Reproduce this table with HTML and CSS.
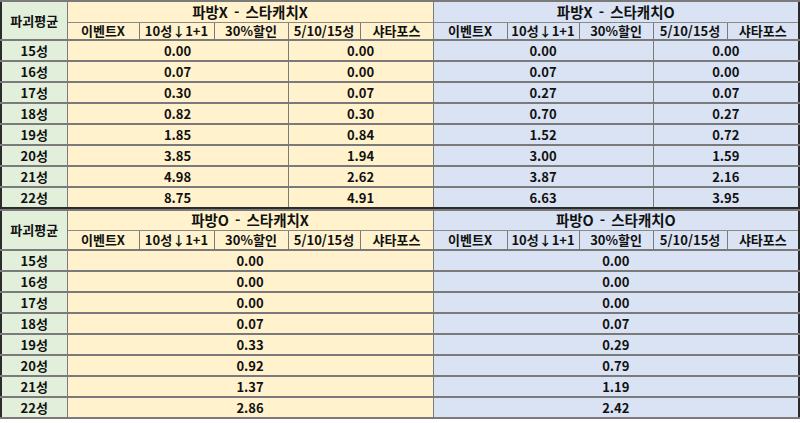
FILE: index.html
```html
<!DOCTYPE html>
<html lang="ko">
<head>
<meta charset="utf-8">
<title>파괴평균</title>
<link rel="stylesheet" href="styles.css">
</head>
<body>
<table class="sheet t1">
  <colgroup>
    <col class="c0"><col class="c1"><col class="c2"><col class="c3"><col class="c4"><col class="c5">
    <col class="c6"><col class="c7"><col class="c8"><col class="c9"><col class="c10">
  </colgroup>
  <tr class="h1">
    <th rowspan="2" class="lab">파괴평균</th>
    <th colspan="5" class="y title">파방X - 스타캐치X</th>
    <th colspan="5" class="b div title">파방X - 스타캐치O</th>
  </tr>
  <tr class="h2">
    <th class="y">이벤트X</th><th class="y">10성↓1+1</th><th class="y">30%할인</th><th class="y">5/10/15성</th><th class="y">샤타포스</th>
    <th class="b div">이벤트X</th><th class="b">10성↓1+1</th><th class="b">30%할인</th><th class="b">5/10/15성</th><th class="b">샤타포스</th>
  </tr>
  <tr><td class="lab">15성</td><td colspan="3" class="y">0.00</td><td colspan="2" class="y">0.00</td><td colspan="3" class="b div">0.00</td><td colspan="2" class="b">0.00</td></tr>
  <tr><td class="lab">16성</td><td colspan="3" class="y">0.07</td><td colspan="2" class="y">0.00</td><td colspan="3" class="b div">0.07</td><td colspan="2" class="b">0.00</td></tr>
  <tr><td class="lab">17성</td><td colspan="3" class="y">0.30</td><td colspan="2" class="y">0.07</td><td colspan="3" class="b div">0.27</td><td colspan="2" class="b">0.07</td></tr>
  <tr><td class="lab">18성</td><td colspan="3" class="y">0.82</td><td colspan="2" class="y">0.30</td><td colspan="3" class="b div">0.70</td><td colspan="2" class="b">0.27</td></tr>
  <tr><td class="lab">19성</td><td colspan="3" class="y">1.85</td><td colspan="2" class="y">0.84</td><td colspan="3" class="b div">1.52</td><td colspan="2" class="b">0.72</td></tr>
  <tr><td class="lab">20성</td><td colspan="3" class="y">3.85</td><td colspan="2" class="y">1.94</td><td colspan="3" class="b div">3.00</td><td colspan="2" class="b">1.59</td></tr>
  <tr><td class="lab">21성</td><td colspan="3" class="y">4.98</td><td colspan="2" class="y">2.62</td><td colspan="3" class="b div">3.87</td><td colspan="2" class="b">2.16</td></tr>
  <tr><td class="lab">22성</td><td colspan="3" class="y">8.75</td><td colspan="2" class="y">4.91</td><td colspan="3" class="b div">6.63</td><td colspan="2" class="b">3.95</td></tr>
</table>
<table class="sheet t2">
  <colgroup>
    <col class="c0"><col class="c1"><col class="c2"><col class="c3"><col class="c4"><col class="c5">
    <col class="c6"><col class="c7"><col class="c8"><col class="c9"><col class="c10">
  </colgroup>
  <tr class="h1">
    <th rowspan="2" class="lab">파괴평균</th>
    <th colspan="5" class="y title">파방O - 스타캐치X</th>
    <th colspan="5" class="b div title">파방O - 스타캐치O</th>
  </tr>
  <tr class="h2">
    <th class="y">이벤트X</th><th class="y">10성↓1+1</th><th class="y">30%할인</th><th class="y">5/10/15성</th><th class="y">샤타포스</th>
    <th class="b div">이벤트X</th><th class="b">10성↓1+1</th><th class="b">30%할인</th><th class="b">5/10/15성</th><th class="b">샤타포스</th>
  </tr>
  <tr><td class="lab">15성</td><td colspan="5" class="y">0.00</td><td colspan="5" class="b div">0.00</td></tr>
  <tr><td class="lab">16성</td><td colspan="5" class="y">0.00</td><td colspan="5" class="b div">0.00</td></tr>
  <tr><td class="lab">17성</td><td colspan="5" class="y">0.00</td><td colspan="5" class="b div">0.00</td></tr>
  <tr><td class="lab">18성</td><td colspan="5" class="y">0.07</td><td colspan="5" class="b div">0.07</td></tr>
  <tr><td class="lab">19성</td><td colspan="5" class="y">0.33</td><td colspan="5" class="b div">0.29</td></tr>
  <tr><td class="lab">20성</td><td colspan="5" class="y">0.92</td><td colspan="5" class="b div">0.79</td></tr>
  <tr><td class="lab">21성</td><td colspan="5" class="y">1.37</td><td colspan="5" class="b div">1.19</td></tr>
  <tr><td class="lab">22성</td><td colspan="5" class="y">2.86</td><td colspan="5" class="b div">2.42</td></tr>
</table>
</body>
</html>
```
FILE: styles.css
```css
html, body {
  margin: 0;
  padding: 0;
  background: #ffffff;
}
body {
  font-family: "Noto Sans CJK KR", "Noto Sans", "Liberation Sans", sans-serif;
  font-weight: 700;
  font-size: 13px;
  color: #111111;
}
.sheet {
  border-collapse: collapse;
  table-layout: fixed;
  width: 799px;
  border: 2px solid #2b2b2b;
}
.sheet th,
.sheet td {
  padding: 0;
  text-align: center;
  vertical-align: middle;
  font-weight: 700;
  line-height: 16px;
  white-space: nowrap;
  overflow: hidden;
  border-left: 1px solid #7a7a7a;
  border-right: 1px solid #7a7a7a;
  border-top: 2px solid #7a7a7a;
  border-bottom: 2px solid #7a7a7a;
}
.c0 { width: 66px; }
.c1 { width: 72px; }
.c2 { width: 75px; }
.c3 { width: 74px; }
.c4 { width: 72px; }
.c5 { width: 73px; }
.c6 { width: 74px; }
.c7 { width: 72px; }
.c8 { width: 74px; }
.c9 { width: 74px; }
.c10 { width: 72px; }

.t1 .h1 { height: 21px; }
.t1 .h2 { height: 18px; }
.t2 .h1 { height: 20px; }
.t2 .h2 { height: 20px; }
.sheet tr { height: 21px; }

.h1 th { border-bottom: 1px solid #8a8a8a; }
.h2 th { border-top: 1px solid #8a8a8a; }
.title { word-spacing: 2px; font-size: 14.5px; }

.lab {
  background: #e2efda;
  border-right: 2px solid #555555;
}
.y { background: #fff2cc; }
.b { background: #dae3f3; }
.div { border-left: 2px solid #2f2f2f; }
.t1 tr:last-child td { border-bottom: 2px solid #2b2b2b; }
```
